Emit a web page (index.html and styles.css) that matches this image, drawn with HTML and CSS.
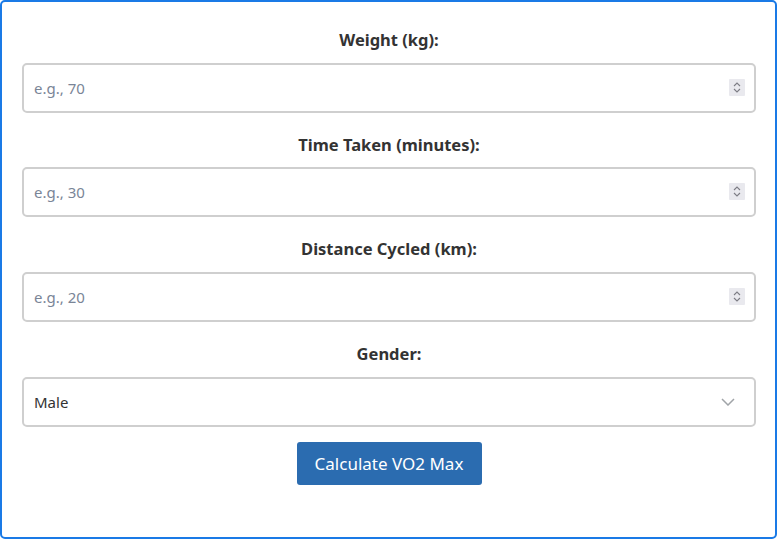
FILE: index.html
```html
<!DOCTYPE html>
<html lang="en">
<head>
<meta charset="utf-8">
<title>VO2 Max Calculator</title>
<link rel="stylesheet" href="styles.css">
</head>
<body>
<form class="card">
  <label class="field-label" for="weight">Weight (kg):</label>
  <div class="input-wrap">
    <input class="field" id="weight" type="number" placeholder="e.g., 70">
    <span class="spinner"><svg width="16" height="17" viewBox="0 0 16 17"><path d="M5 7l3-3 3 3M5 10l3 3 3-3" fill="none" stroke="#7d7d85" stroke-width="1.1"/></svg></span>
  </div>

  <label class="field-label" for="time">Time Taken (minutes):</label>
  <div class="input-wrap">
    <input class="field" id="time" type="number" placeholder="e.g., 30">
    <span class="spinner"><svg width="16" height="17" viewBox="0 0 16 17"><path d="M5 7l3-3 3 3M5 10l3 3 3-3" fill="none" stroke="#7d7d85" stroke-width="1.1"/></svg></span>
  </div>

  <label class="field-label" for="distance">Distance Cycled (km):</label>
  <div class="input-wrap">
    <input class="field" id="distance" type="number" placeholder="e.g., 20">
    <span class="spinner"><svg width="16" height="17" viewBox="0 0 16 17"><path d="M5 7l3-3 3 3M5 10l3 3 3-3" fill="none" stroke="#7d7d85" stroke-width="1.1"/></svg></span>
  </div>

  <label class="field-label" for="gender">Gender:</label>
  <div class="input-wrap select-wrap">
    <select class="field select" id="gender">
      <option>Male</option>
      <option>Female</option>
    </select>
    <svg class="chevron" width="14" height="8" viewBox="0 0 14 8"><path d="M1 1l6 6 6-6" fill="none" stroke="#a0a4a8" stroke-width="1.5"/></svg>
  </div>

  <div class="actions">
    <button type="button" class="btn">Calculate VO2 Max</button>
  </div>
</form>
</body>
</html>
```
FILE: styles.css
```css
* { box-sizing: border-box; }
html, body { margin: 0; padding: 0; }
body {
  font-family: "Noto Sans", "Open Sans", sans-serif;
  color: #333;
  background: #fff;
}
.card {
  height: 539px;
  border: 2px solid #1a7ae6;
  border-radius: 5px;
  padding: 26px 19px 20px 20px;
  display: flex;
  flex-direction: column;
}
.field-label {
  display: block;
  text-align: center;
  font-weight: 700;
  font-size: 16.5px;
  line-height: 24.7px;
  margin-bottom: 10px;
}
.input-wrap {
  position: relative;
  margin-bottom: 20px;
}
.field {
  display: block;
  width: 100%;
  height: 50px;
  border: 2px solid #cfcfcf;
  border-radius: 5px;
  padding: 0 10px;
  font-family: inherit;
  font-size: 15px;
  color: #333;
  background: #fff;
  outline: none;
  -moz-appearance: textfield;
}
.field::placeholder { color: #7a8597; }
.field::-webkit-inner-spin-button,
.field::-webkit-outer-spin-button { -webkit-appearance: none; margin: 0; }
.spinner {
  position: absolute;
  right: 11px;
  top: 16px;
  width: 16px;
  height: 17px;
  background: #e9e9ee;
  border-radius: 1px;
  display: flex;
}
.select-wrap { margin-bottom: 15px; }
.select {
  appearance: none;
  -webkit-appearance: none;
}
.chevron {
  position: absolute;
  right: 21px;
  top: 21px;
  pointer-events: none;
}
.actions { display: flex; justify-content: center; }
.btn {
  width: 185px;
  height: 43px;
  border: none;
  border-radius: 3px;
  background: #2b6cb0;
  color: #fff;
  font-family: inherit;
  font-size: 17px;
  cursor: pointer;
}
```
